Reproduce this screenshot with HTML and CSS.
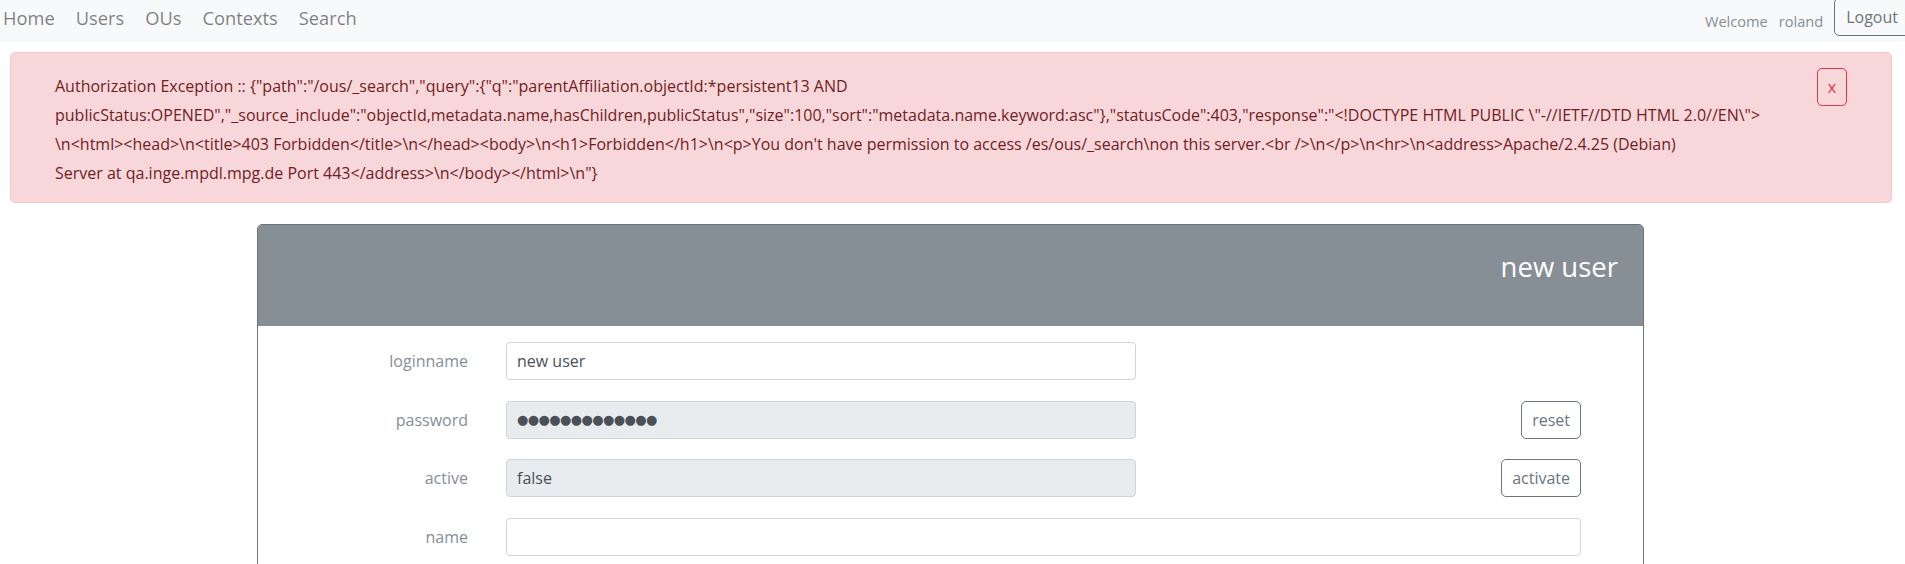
FILE: index.html
```html
<!DOCTYPE html>
<html>
<head>
  <meta charset="utf-8">
  <link rel="stylesheet" href="styles.css">
</head>
<body>
  <div class="navbar">
    <div class="nav-links">
      <a class="nav-link" href="#">Home</a>
      <a class="nav-link" href="#">Users</a>
      <a class="nav-link" href="#">OUs</a>
      <a class="nav-link" href="#">Contexts</a>
      <a class="nav-link" href="#">Search</a>
    </div>
    <div class="nav-user">
      <span class="welcome">Welcome</span>
      <span class="welcome">roland</span>
      <button class="btn btn-outline logout">Logout</button>
    </div>
  </div>

  <div class="alert">
    <div class="alert-text">
      Authorization Exception :: {"path":"/ous/_search","query":{"q":"parentAffiliation.objectId:*persistent13 AND<br>
      publicStatus:OPENED","_source_include":"objectId,metadata.name,hasChildren,publicStatus","size":100,"sort":"metadata.name.keyword:asc"},"statusCode":403,"response":"&lt;!DOCTYPE HTML PUBLIC \"-//IETF//DTD HTML 2.0//EN\"&gt;<br>
      \n&lt;html&gt;&lt;head&gt;\n&lt;title&gt;403 Forbidden&lt;/title&gt;\n&lt;/head&gt;&lt;body&gt;\n&lt;h1&gt;Forbidden&lt;/h1&gt;\n&lt;p&gt;You don't have permission to access /es/ous/_search\non this server.&lt;br /&gt;\n&lt;/p&gt;\n&lt;hr&gt;\n&lt;address&gt;Apache/2.4.25 (Debian)<br>
      Server at qa.inge.mpdl.mpg.de Port 443&lt;/address&gt;\n&lt;/body&gt;&lt;/html&gt;\n"}
    </div>
    <button class="btn btn-close">x</button>
  </div>

  <div class="card">
    <div class="card-header">
      <h4>new user</h4>
    </div>
    <div class="card-body">
      <div class="form-row">
        <label class="form-label">loginname</label>
        <input class="form-control short" type="text" value="new user">
      </div>
      <div class="form-row">
        <label class="form-label">password</label>
        <input class="form-control short secret" type="text" value="●●●●●●●●●●●●●" disabled>
        <button class="btn btn-outline row-btn">reset</button>
      </div>
      <div class="form-row">
        <label class="form-label">active</label>
        <input class="form-control short" type="text" value="false" disabled>
        <button class="btn btn-outline row-btn">activate</button>
      </div>
      <div class="form-row">
        <label class="form-label">name</label>
        <input class="form-control full" type="text" value="">
      </div>
    </div>
  </div>
</body>
</html>
```

FILE: styles.css
```css
html, body {
  overflow: hidden;
}

body {
  margin: 0;
  font-family: "Open Sans", "Liberation Sans", sans-serif;
  font-size: 16px;
  line-height: 1.5;
  color: #212529;
  background: #fff;
}

.navbar {
  display: flex;
  justify-content: space-between;
  align-items: flex-start;
  height: 42px;
  padding-left: 3px;
  background: #f8f9fa;
  overflow: hidden;
}

.nav-links {
  display: flex;
  gap: 21px;
  padding-top: 3px;
}

.nav-link {
  font-size: 18.3px;
  line-height: 30px;
  color: rgba(0, 0, 0, 0.5);
  text-decoration: none;
}

.nav-user {
  display: flex;
  align-items: flex-start;
  gap: 11px;
  margin-right: -5px;
}

.welcome {
  margin-top: 10px;
  font-size: 14.6px;
  line-height: 22px;
  color: #868e96;
}

.btn {
  font-family: inherit;
  font-size: 16px;
  line-height: 26px;
  padding: 5px 10px;
  background: transparent;
  border-radius: 5px;
  cursor: pointer;
}

.btn-outline {
  color: #6c757d;
  border: 1px solid #6c757d;
}

.logout {
  margin-top: -2px;
  padding: 5px 11px;
}

.alert {
  display: flex;
  align-items: flex-start;
  margin: 10px 13px 0 10px;
  padding: 15px 44px 14px;
  background: #f8d7da;
  border: 1px solid #f5c6cb;
  border-radius: 5px;
  color: #721c24;
}

.alert-text {
  flex: 1;
  padding-top: 4px;
  line-height: 29px;
  white-space: nowrap;
}

.btn-close {
  flex-shrink: 0;
  margin-left: 20px;
  color: #dc3545;
  border: 1px solid #dc3545;
}

.card {
  box-sizing: border-box;
  width: 1387px;
  margin: 21px 0 0 257px;
  border: 1px solid #6c757d;
  border-radius: 5px;
  overflow: hidden;
}

.card-header {
  padding: 24px 25px 41px;
  background: #868e96;
  color: #fff;
  text-align: right;
}

.card-header h4 {
  margin: 0;
  font-size: 27.5px;
  line-height: 36px;
  font-weight: 400;
}

.card-body {
  padding: 16px 62px 40px 25px;
}

.form-row {
  display: flex;
  align-items: center;
  margin-bottom: 20.5px;
}

.form-label {
  width: 185px;
  margin-right: 38px;
  text-align: right;
  font-size: 16px;
  color: #868e96;
}

.form-control {
  box-sizing: border-box;
  height: 38px;
  padding: 5px 10px;
  font-family: inherit;
  font-size: 16px;
  color: #495057;
  background: #fff;
  border: 1px solid #ced4da;
  border-radius: 4px;
}

.form-control:disabled {
  background: #e9ecef;
  color: #495057;
  opacity: 1;
}

.short {
  width: 630px;
}

.full {
  flex: 1;
}

.secret {
  font-family: "DejaVu Sans", sans-serif;
  font-size: 13px;
  letter-spacing: -0.6px;
  color: #495057;
}

.row-btn {
  margin-left: auto;
}
```
